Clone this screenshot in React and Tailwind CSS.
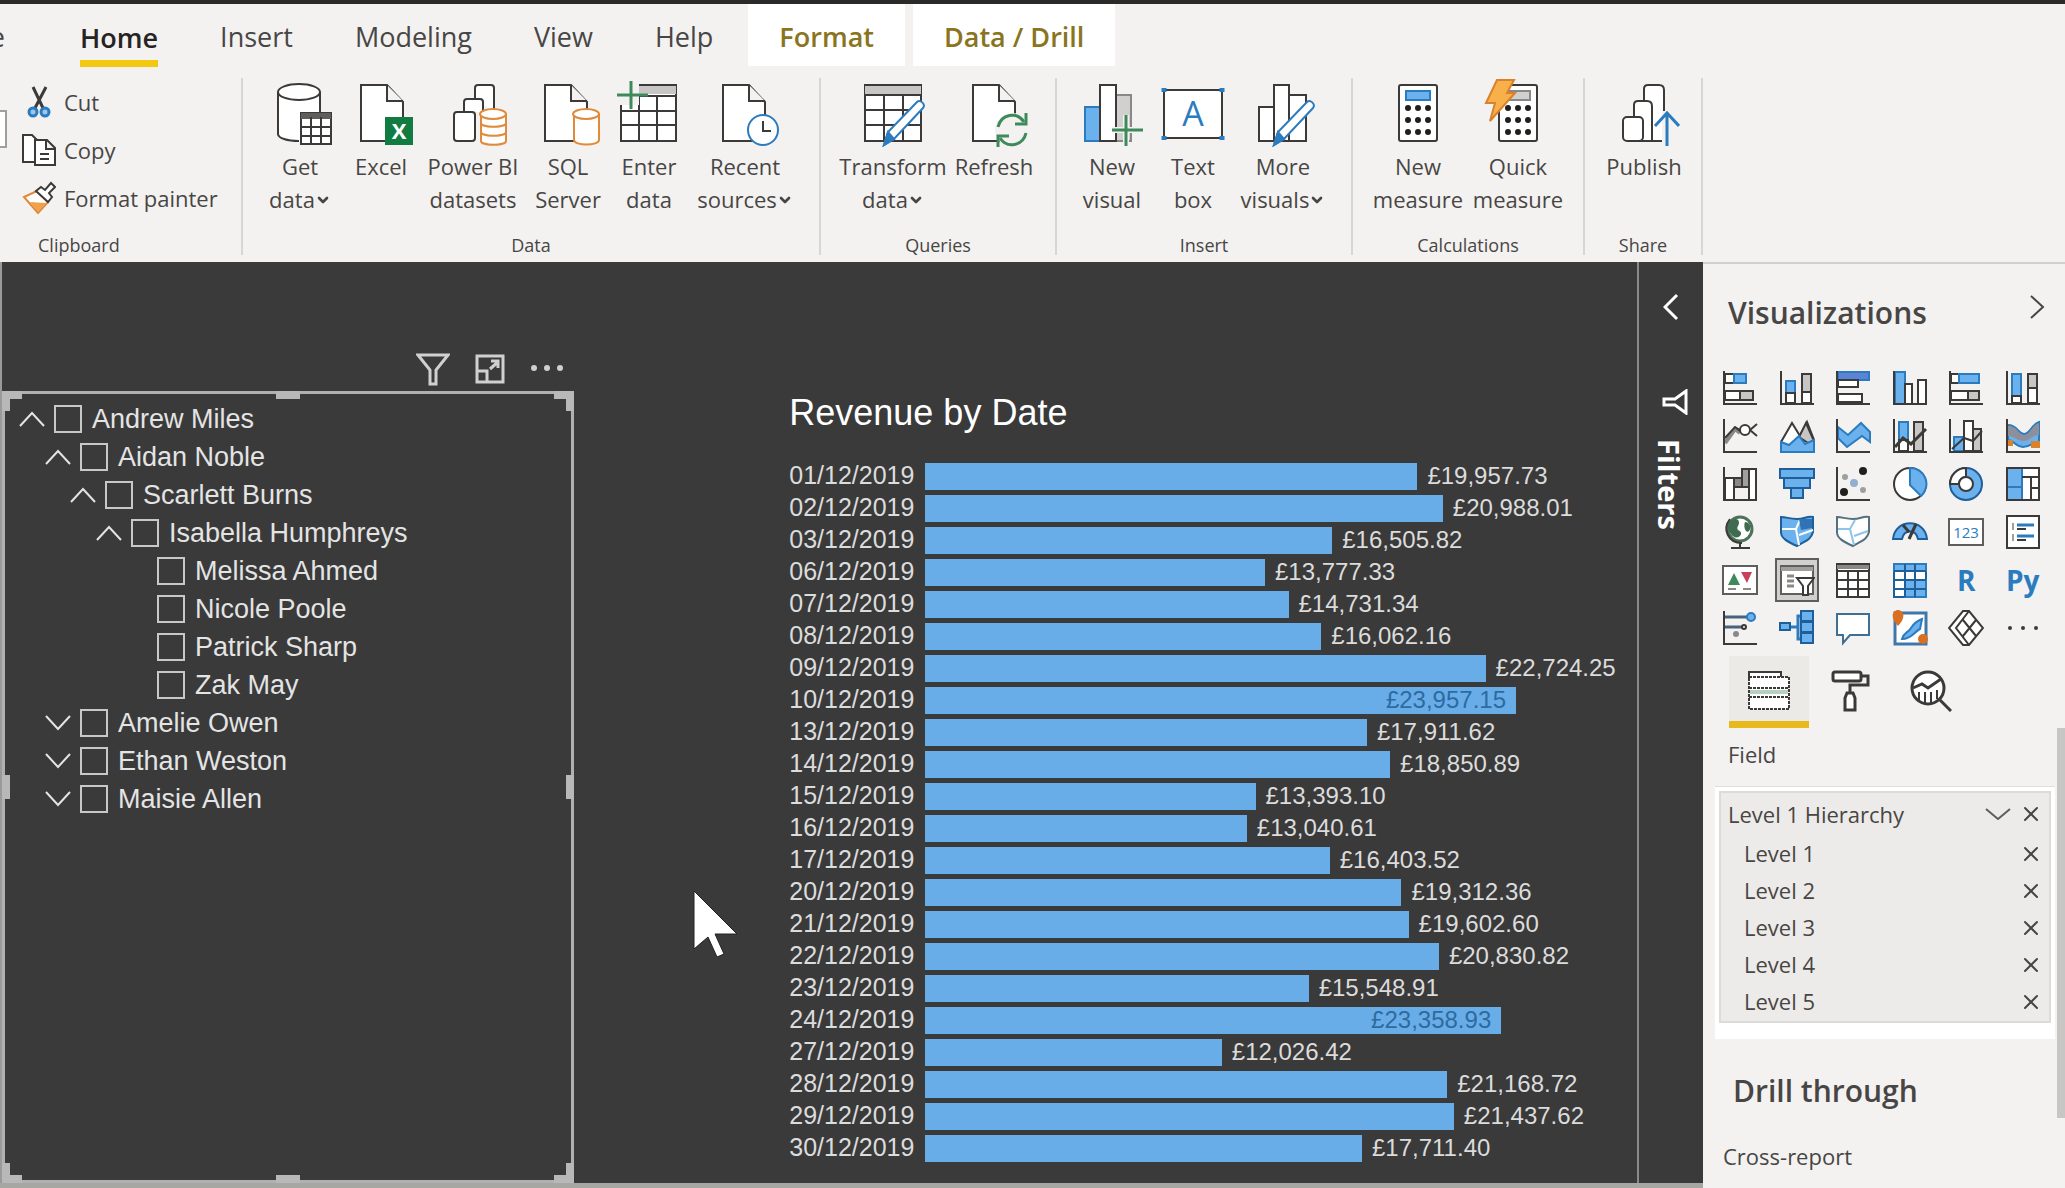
import { ChevronDown, X } from 'lucide-react';
import { useState } from 'react';

const DARK = '#3b3a39';
const BLUE = '#2b7bbf';
const SKY = '#6bb1ee';
const GREEN = '#3f8a5b';
const ORANGE = '#e08a3c';

/* ---------- ribbon icons (72 x 68) ---------- */

const RibbonSvg = ({ children }) => (
  <svg className="w-[72px] h-[68px] shrink-0" viewBox="0 0 72 68" fill="none" stroke={DARK} strokeWidth="2" aria-hidden="true">
    {children}
  </svg>
);

const Doc = ({ x = 13 }) => (
  <g transform={`translate(${x} 0)`}>
    <path d="M1 6h26l16 17v39H1z" fill="#fff" />
    <path d="M27 6v16h16" fill="#f3f2f1" />
  </g>
);

const Pencil = () => (
  <>
    <path d="M27 66l4-13 29-30c3-3 9 2 6 6L37 60z" fill="#fff" stroke={BLUE} />
    <path d="M27 66l4-13 6 7z" fill={BLUE} stroke={BLUE} />
  </>
);

const Calculator = ({ screen }) => (
  <>
    <rect x="17" y="6" width="38" height="56" rx="2" fill="#fff" />
    <rect x="24" y="12" width="24" height="9" fill={screen} stroke={screen === SKY ? BLUE : '#8a8886'} />
    {[29, 41, 53].map((y) =>
      [26, 36, 46].map((x) => <circle key={`${x}-${y}`} cx={x} cy={y} r="3" fill="#201f1e" stroke="none" />)
    )}
  </>
);

const ribbonIcons = {
  getData: (
    <RibbonSvg>
      <path d="M14 13v42c0 4 9 8 21 8h1V34h20V13z" fill="#fff" stroke="none" />
      <path d="M14 13v42c0 4 9 7 21 7M56 13v20" />
      <ellipse cx="35" cy="13" rx="21" ry="8" fill="#fff" />
      <rect x="37" y="34" width="30" height="31" fill="#fff" />
      <path d="M37 37h30" strokeWidth="6" stroke="#605e5c" />
      <path d="M37 48h30M37 57h30M47 38v27M57 38v27" />
    </RibbonSvg>
  ),
  excel: (
    <RibbonSvg>
      <Doc x={15} />
      <rect x="40" y="38" width="28" height="28" fill="#107c41" stroke="none" />
      <text x="54" y="60" fontSize="22" fontWeight="700" fill="#fff" stroke="none" textAnchor="middle">X</text>
    </RibbonSvg>
  ),
  datasets: (
    <RibbonSvg>
      <path d="M38 20V9q0-3 3-3h13q3 0 3 3v24" fill="#fff" />
      <path d="M27 33V23q0-3 3-3h13q3 0 3 3v10" fill="#fff" />
      <rect x="17" y="33" width="21" height="29" rx="3" fill="#fff" />
      <path d="M44 35v27c0 5 25 5 25 0V35" fill="#fff" stroke={ORANGE} />
      <ellipse cx="56" cy="35" rx="13" ry="5" fill="#fff" stroke={ORANGE} />
      <path d="M44 44c0 5 25 5 25 0M44 53c0 5 25 5 25 0" stroke={ORANGE} />
    </RibbonSvg>
  ),
  sql: (
    <RibbonSvg>
      <Doc x={12} />
      <path d="M42 35v26c0 6 25 6 25 0V35" fill="#fff" stroke={ORANGE} />
      <ellipse cx="54" cy="35" rx="13" ry="5" fill="#fff" stroke={ORANGE} />
    </RibbonSvg>
  ),
  enter: (
    <RibbonSvg>
      <rect x="8" y="6" width="55" height="56" fill="#fff" />
      <path d="M8 11h55" stroke="#c8c6c4" strokeWidth="8" />
      <path d="M8 6h55M8 17h55M8 32h55M8 46h55M26 17v45M44 17v45" />
      <path d="M2 0h24v26H2z" fill="#f3f2f1" stroke="none" />
      <path d="M18 2v28M4 16h31" stroke={GREEN} strokeWidth="3" />
    </RibbonSvg>
  ),
  recent: (
    <RibbonSvg>
      <Doc />
      <circle cx="54" cy="51" r="15" fill="#fff" stroke={BLUE} />
      <path d="M54 42v10h8" />
    </RibbonSvg>
  ),
  transform: (
    <RibbonSvg>
      <rect x="8" y="6" width="56" height="56" fill="#fff" />
      <path d="M8 11h56" strokeWidth="8" stroke="#c8c6c4" />
      <path d="M8 6h56M8 16h56M8 31h56M8 46h56M27 16v46M46 16v46" />
      <Pencil />
    </RibbonSvg>
  ),
  refresh: (
    <RibbonSvg>
      <Doc x={14} />
      <circle cx="54" cy="51" r="17" fill="#f3f2f1" stroke="none" />
      <path d="M40 48c3-13 19-16 26-5M68 54c-3 13-19 16-26 5" stroke={GREEN} strokeWidth="3" />
      <path d="M68 34v11H57M40 68V57h11" stroke={GREEN} strokeWidth="3" />
    </RibbonSvg>
  ),
  newVisual: (
    <RibbonSvg>
      <rect x="9" y="28" width="15" height="34" fill={SKY} stroke={BLUE} />
      <rect x="40" y="16" width="15" height="46" fill="#d2d0ce" stroke="#8a8886" />
      <rect x="24" y="6" width="16" height="56" fill="#fff" />
      <path d="M50 36v31M36 51h29" stroke="#f3f2f1" strokeWidth="6" />
      <path d="M50 36v31M36 51h31" stroke={GREEN} strokeWidth="3" />
    </RibbonSvg>
  ),
  textBox: (
    <RibbonSvg>
      <rect x="7" y="11" width="58" height="48" fill="#fff" />
      <path d="M7 9v4M65 9v4M7 57v4M65 57v4" stroke={BLUE} strokeWidth="5" />
      <text x="36" y="47" fontSize="34" fill={BLUE} stroke="none" textAnchor="middle">A</text>
    </RibbonSvg>
  ),
  moreVisuals: (
    <RibbonSvg>
      <rect x="12" y="28" width="15" height="34" fill="#fff" />
      <rect x="42" y="16" width="17" height="46" fill="#fff" />
      <rect x="27" y="6" width="15" height="56" fill="#fff" />
      <Pencil />
    </RibbonSvg>
  ),
  newMeasure: (
    <RibbonSvg>
      <Calculator screen={SKY} />
    </RibbonSvg>
  ),
  quickMeasure: (
    <RibbonSvg>
      <Calculator screen="#d2d0ce" />
      <path d="M15 1h17l-7 13h8L8 42l5-18H4z" fill="#f7b04a" stroke="#d9822b" />
    </RibbonSvg>
  ),
  publish: (
    <RibbonSvg>
      <path d="M36 20V10q0-4 4-4h11q5 0 5 5v51H36z" fill="#fff" />
      <path d="M26 38V26q0-4 4-4h9q5 0 5 5v35H26z" fill="#fff" />
      <rect x="15" y="38" width="20" height="24" rx="4" fill="#fff" />
      <path d="M59 32v35" stroke="#f3f2f1" strokeWidth="10" />
      <path d="M59 34v33M47 47l12-13 12 13" stroke={BLUE} strokeWidth="3" />
    </RibbonSvg>
  )
};

/* ---------- visual gallery icons (36 x 36) ---------- */

const Axis = () => <path d="M2 1v33h33" />;

const visuals = [
  ['Stacked bar chart', <><rect x="3" y="4" width="9" height="9" fill="#fff" /><rect x="12" y="4" width="12" height="9" fill={SKY} stroke={BLUE} /><rect x="3" y="21" width="15" height="9" fill="#fff" /><rect x="18" y="21" width="13" height="9" fill="#c8c6c4" /><Axis /></>],
  ['Stacked column chart', <><rect x="7" y="11" width="9" height="12" fill={SKY} stroke={BLUE} /><rect x="7" y="23" width="9" height="10" fill="#fff" /><rect x="23" y="4" width="9" height="18" fill="#c8c6c4" /><rect x="23" y="22" width="9" height="11" fill="#fff" /><Axis /></>],
  ['Clustered bar chart', <><rect x="3" y="2" width="31" height="8" fill="#5b84d6" stroke={BLUE} /><rect x="3" y="10" width="20" height="7" fill="#fff" /><rect x="3" y="24" width="24" height="8" fill="#fff" /><Axis /></>],
  ['Clustered column chart', <><rect x="3" y="2" width="10" height="32" fill={SKY} stroke={BLUE} /><rect x="13" y="14" width="7" height="20" fill="#fff" /><rect x="26" y="10" width="8" height="24" fill="#fff" /><Axis /></>],
  ['100% stacked bar chart', <><rect x="3" y="4" width="8" height="9" fill="#fff" /><rect x="11" y="4" width="20" height="9" fill={SKY} stroke={BLUE} /><rect x="3" y="21" width="17" height="9" fill="#fff" /><rect x="20" y="21" width="11" height="9" fill="#c8c6c4" /><Axis /></>],
  ['100% stacked column chart', <><rect x="7" y="4" width="9" height="22" fill={SKY} stroke={BLUE} /><rect x="7" y="26" width="9" height="7" fill="#fff" /><rect x="23" y="4" width="9" height="14" fill="#c8c6c4" /><rect x="23" y="18" width="9" height="15" fill="#fff" /><Axis /></>],

  ['Line chart', <><path d="M3 25L13 11l5 4" stroke="#8a8886" strokeWidth="4" /><path d="M3 20L13 9l5 4M28 12l7-6M28 12l7 6M13 9l5 3" /><circle cx="23" cy="12" r="5" fill="#fff" /><Axis /></>],
  ['Area chart', <><path d="M2 34V24L13 5l8 13 7-14 7 18v12z" fill="#fff" /><path d="M20 19l7-14 8 18v6z" fill="#c8c6c4" /><path d="M2 34V24l8 3 10-9 6 8 9-4v12z" fill={SKY} stroke={BLUE} /></>],
  ['Stacked area chart', <><path d="M3 9l10 8L26 5l9 9v10l-8-6-15 11-9-9z" fill={SKY} stroke={BLUE} /><Axis /></>],
  ['Line and stacked column chart', <><rect x="7" y="4" width="9" height="18" fill={SKY} stroke={BLUE} /><rect x="7" y="22" width="9" height="11" fill="#fff" /><rect x="22" y="4" width="9" height="29" fill="#c8c6c4" /><path d="M3 29l8-9 8 6 15-15" strokeWidth="3" /><Axis /></>],
  ['Line and clustered column chart', <><rect x="6" y="19" width="10" height="14" fill={SKY} stroke={BLUE} /><rect x="16" y="3" width="9" height="30" fill="#fff" /><rect x="25" y="11" width="8" height="22" fill="#c8c6c4" /><path d="M4 31l12-11 9 3 9-10" /><Axis /></>],
  ['Ribbon chart', <><path d="M3 7c10 0 10 9 16 9s8-10 15-12v20c-6 0-8 5-16 5S9 22 3 22z" fill={SKY} stroke={BLUE} /><path d="M3 8c10 0 10 9 16 9s8-10 15-12v12c-8 0-8 6-15 6S9 18 3 18z" fill="#8f8f9c" stroke="none" /><path d="M26 23h9v7h-9zM3 22h5v6H3z" fill="#d9822b" stroke="none" /><Axis /></>],

  ['Waterfall chart', <><rect x="3" y="12" width="9" height="22" fill="#fff" /><rect x="12" y="12" width="10" height="9" fill="#8a8886" /><rect x="20" y="3" width="7" height="18" fill="#a19f9d" /><rect x="27" y="3" width="7" height="31" fill="#fff" /><Axis /></>],
  ['Funnel', <g fill={SKY} stroke="#1f5f99"><rect x="1" y="3" width="34" height="9" /><rect x="5" y="12" width="26" height="10" /><rect x="12" y="22" width="12" height="10" /></g>],
  ['Scatter chart', <><g stroke="none"><circle cx="28" cy="5" r="4" fill="#201f1e" /><circle cx="9" cy="26" r="4" fill="#201f1e" /><circle cx="10" cy="11" r="3" fill="#a19f9d" /><circle cx="19" cy="17" r="4" fill="#8fb0cf" /><circle cx="28" cy="24" r="3" fill="#a19f9d" /></g><Axis /></>],
  ['Pie chart', <><circle cx="18" cy="18" r="16" fill="#fff" /><path d="M18 2v17l11 11A16 16 0 0 0 18 2z" fill={SKY} stroke={BLUE} /></>],
  ['Donut chart', <><circle cx="18" cy="18" r="16" fill={SKY} stroke="#1f5f99" /><path d="M18 2A16 16 0 0 0 2 18h9a7 7 0 0 1 7-7z" fill="#fff" /><circle cx="18" cy="18" r="7" fill="#fff" /></>],
  ['Treemap', <><rect x="2" y="2" width="32" height="32" fill="#fff" /><path d="M2 2h15v32H2zM2 21h15" fill={SKY} stroke={BLUE} /><path d="M17 11h17M26 11v23M26 22h8M2 2h32v32H2z" /></>],

  ['Map', <><circle cx="18" cy="15" r="12" fill="#fff" stroke="#4a7359" strokeWidth="3" /><path d="M9 7c6-5 10 0 7 5s4 4 3 8-7 5-10 0-5-8 0-13zM23 8c5 0 7 6 4 9s-6-4-4-9z" fill="#3f6b4f" stroke="none" /><path d="M8 5C0 15 6 29 20 29M18 29v5M9 34h19" /></>],
  ['Filled map', <><path d="M2 3c6 0 8 2 16 2s9-3 16-2v15c-2 8-8 9-16 14C9 28 1 24 2 17z" fill={SKY} stroke="#1f5f99" /><path d="M3 15h14l4-9M17 15l3 16M20 21l14-5" stroke="#fff" /><path d="M20 5h13v9l-11 2z" fill="#2f72b5" stroke="none" /></>],
  ['Shape map', <><path d="M2 3c6 0 8 2 16 2s9-3 16-2v15c-2 8-8 9-16 14C9 28 1 24 2 17z" fill="#fff" stroke="#55707d" /><path d="M3 15h12l5-9M15 15l4 16M19 22l14-5" stroke="#8fc4ea" /></>],
  ['Gauge', <><path d="M1 25C3 4 33 4 35 25h-9c-2-10-14-10-16 0z" fill={SKY} stroke="#1f5f99" /><path d="M11 11l6 7M24 10l-7 15" strokeWidth="3" /></>],
  ['Card', <><rect x="1" y="5" width="34" height="26" fill="#fff" stroke="#605e5c" /><text x="18" y="24" fontSize="15" fill={BLUE} stroke="none" textAnchor="middle">123</text></>],
  ['Multi-row card', <><rect x="2" y="2" width="32" height="32" fill="#fff" /><path d="M8 9v7M8 20v7" stroke="#a19f9d" /><path d="M12 11h17M12 22h17" stroke={BLUE} strokeWidth="3" /><path d="M12 15h9M12 26h9" /></>],

  ['KPI', <><rect x="1" y="4" width="34" height="28" fill="#fff" stroke="#605e5c" /><path d="M6 23l6-12 6 12z" fill={GREEN} stroke="none" /><path d="M19 10h11l-5 11z" fill="#c8415a" stroke="none" /><path d="M6 27h8M21 27h8" stroke="#8a8886" /></>],
  ['Slicer', <><rect x="2" y="4" width="32" height="28" fill="#fff" stroke="#605e5c" /><path d="M2 7h32" stroke="#a19f9d" strokeWidth="4" /><path d="M8 14h7M8 19h7M8 24h7" stroke="#8a8886" strokeWidth="3" /><path d="M18 16h17l-6 8v9h-5v-9z" fill="#fff" /></>],
  ['Table', <><rect x="2" y="2" width="32" height="33" fill="#fff" /><path d="M2 5h32" stroke="#8a8886" strokeWidth="4" /><path d="M2 9h32M2 18h32M2 27h32M13 9v26M23 9v26" /></>],
  ['Matrix', <><rect x="2" y="2" width="32" height="33" fill="#fff" stroke="#1f5f99" /><path d="M2 2h32v7H2zM13 18h21v17H13z" fill={SKY} stroke={BLUE} /><path d="M2 9h32M2 18h32M2 27h32M13 2v33M23 2v33" stroke="#1f5f99" /></>],
  ['R script visual', <span className="text-[28px] leading-9 font-bold text-[#2b7bbf]">R</span>],
  ['Python visual', <span className="text-[28px] leading-9 font-bold text-[#2b7bbf]">Py</span>],

  ['Key influencers', <><path d="M3 7h24M3 17h18" stroke="#46627c" strokeWidth="3" /><circle cx="29" cy="7" r="4" fill={SKY} stroke={BLUE} /><circle cx="22" cy="17" r="2" /><circle cx="14" cy="24" r="3" fill="#8a8886" stroke="none" /><Axis /></>],
  ['Decomposition tree', <><path d="M10 17h9M24 6h-5v23h5" stroke={BLUE} strokeWidth="3" /><g fill={SKY} stroke="#1f5f99"><rect x="1" y="13" width="10" height="7" /><rect x="22" y="1" width="12" height="10" /><rect x="22" y="12" width="12" height="10" /><rect x="22" y="23" width="12" height="10" /></g></>],
  ['Q&A', <path d="M2 4h32v21H15l-7 8v-8H2z" fill="#fff" stroke="#3f6f95" />],
  ['ArcGIS map', <><rect x="3" y="3" width="31" height="31" fill="#fff" stroke="#3f77ab" strokeWidth="3" /><path d="M10 29c2-7 6-6 9-11s6-7 11-9l-2 10c-5 2-8 10-18 10z" fill={SKY} stroke={BLUE} /><path d="M6 16C-3 7 1 0 6 0s9 7 0 16z" fill="#d9701f" stroke="none" /><circle cx="31" cy="29" r="5" fill="#d9701f" stroke="none" /></>],
  ['Power Apps', <><path d="M15 1h6l14 17-14 17h-6L1 18z" fill="#fff" /><path d="M21 1L8 18l13 17M15 10l13 16M28 10L15 26" /></>],
  ['More visuals', <g fill={DARK} stroke="none"><circle cx="5" cy="18" r="2" /><circle cx="18" cy="18" r="2" /><circle cx="31" cy="18" r="2" /></g>]
];

const textVisuals = ['R script visual', 'Python visual'];

/* ---------- data ---------- */

const ribbonGroups = [
  {
    name: 'Data',
    className: 'w-[578px] pl-[17px]',
    buttons: [
      ['getData', 'w-20', 'Get', 'data', true],
      ['excel', 'w-[82px]', 'Excel'],
      ['datasets', 'w-[102px]', 'Power BI', 'datasets'],
      ['sql', 'w-[88px]', 'SQL', 'Server'],
      ['enter', 'w-[74px]', 'Enter', 'data'],
      ['recent', 'w-[118px]', 'Recent', 'sources', true]
    ]
  },
  {
    name: 'Queries',
    className: 'w-[236px] pl-[17px]',
    buttons: [
      ['transform', 'w-[110px]', 'Transform', 'data', true],
      ['refresh', 'w-[92px]', 'Refresh']
    ]
  },
  {
    name: 'Insert',
    className: 'w-[296px] pl-[14px]',
    buttons: [
      ['newVisual', 'w-[82px]', 'New', 'visual'],
      ['textBox', 'w-20', 'Text', 'box'],
      ['moreVisuals', 'w-[100px]', 'More', 'visuals', true]
    ]
  },
  {
    name: 'Calculations',
    className: 'w-[232px] pl-[15px]',
    buttons: [
      ['newMeasure', 'w-[100px]', 'New', 'measure'],
      ['quickMeasure', 'w-[100px]', 'Quick', 'measure']
    ]
  },
  {
    name: 'Share',
    className: 'w-[118px] pl-[9px]',
    buttons: [['publish', 'w-[100px]', 'Publish']]
  }
];

const people = [
  { name: 'Andrew Miles', level: 0, open: true },
  { name: 'Aidan Noble', level: 1, open: true },
  { name: 'Scarlett Burns', level: 2, open: true },
  { name: 'Isabella Humphreys', level: 3, open: true },
  { name: 'Melissa Ahmed', level: 4 },
  { name: 'Nicole Poole', level: 4 },
  { name: 'Patrick Sharp', level: 4 },
  { name: 'Zak May', level: 4 },
  { name: 'Amelie Owen', level: 1, open: false },
  { name: 'Ethan Weston', level: 1, open: false },
  { name: 'Maisie Allen', level: 1, open: false }
];

const indents = ['pl-[14px]', 'pl-[40px]', 'pl-[65px]', 'pl-[91px]', 'pl-[117px]'];

const revenue = [
  ['01/12/2019', 19957.73],
  ['02/12/2019', 20988.01],
  ['03/12/2019', 16505.82],
  ['06/12/2019', 13777.33],
  ['07/12/2019', 14731.34],
  ['08/12/2019', 16062.16],
  ['09/12/2019', 22724.25],
  ['10/12/2019', 23957.15],
  ['13/12/2019', 17911.62],
  ['14/12/2019', 18850.89],
  ['15/12/2019', 13393.1],
  ['16/12/2019', 13040.61],
  ['17/12/2019', 16403.52],
  ['20/12/2019', 19312.36],
  ['21/12/2019', 19602.6],
  ['22/12/2019', 20830.82],
  ['23/12/2019', 15548.91],
  ['24/12/2019', 23358.93],
  ['27/12/2019', 12026.42],
  ['28/12/2019', 21168.72],
  ['29/12/2019', 21437.62],
  ['30/12/2019', 17711.4]
];

const maxRevenue = Math.max(...revenue.map(([, value]) => value));

const formatMoney = (value) =>
  '£' + value.toLocaleString('en-GB', { minimumFractionDigits: 2, maximumFractionDigits: 2 });

/* ---------- ribbon ---------- */

const Tabs = () => (
  <nav className="flex h-[62px] items-stretch text-[27px] text-[#484644]">
    <button className="w-[5px] mr-11 flex justify-end items-center overflow-hidden pt-1">File</button>
    <button className="px-[31px] pt-3 font-semibold text-[#252423]">
      <span className="block leading-[44px] border-b-[7px] border-[#f2c811]">Home</span>
    </button>
    {['Insert', 'Modeling', 'View', 'Help'].map((tab) => (
      <button key={tab} className="px-[31px] pt-1">{tab}</button>
    ))}
    <button className="bg-white px-[31px] pt-1 ml-1 font-semibold text-[#8a7420]">Format</button>
    <button className="bg-white px-[31px] pt-1 ml-2 font-semibold text-[#8a7420]">Data / Drill</button>
  </nav>
);

const Clipboard = () => (
  <div className="w-[243px] shrink-0 flex border-r-2 border-[#d8d6d4]">
    <div className="w-[7px] h-[38px] mt-8 mr-[15px] shrink-0 border-2 border-l-0 border-[#a19f9d] bg-white" />
    <div className="flex flex-col text-[22px]">
      <button className="h-12 flex items-center gap-2">
        <svg className="w-[34px] h-[34px]" viewBox="0 0 34 34" fill="none" strokeWidth="3">
          <path d="M11 2l10 21M24 2L13 23" stroke={DARK} />
          <circle cx="11" cy="27" r="4" stroke={BLUE} fill="#9cc7ec" />
          <circle cx="23" cy="27" r="4" stroke={BLUE} fill="#9cc7ec" />
        </svg>
        Cut
      </button>
      <button className="h-12 flex items-center gap-2">
        <svg className="w-[34px] h-[34px]" viewBox="0 0 34 34" fill="#fff" stroke={DARK} strokeWidth="2">
          <path d="M13 29H1V2h9l5 5" />
          <path d="M13 7h12l8 8v17H13zM24 7v9h9M18 21h9M18 26h9" />
        </svg>
        Copy
      </button>
      <button className="h-12 flex items-center gap-2">
        <svg className="w-[34px] h-[34px]" viewBox="0 0 34 34" strokeWidth="2">
          <path d="M2 16l13-6 11 11-10 11z" fill="#fff" stroke={ORANGE} />
          <path d="M8 21l16 1-8 9z" fill="#f0a24a" stroke="none" />
          <path d="M14 10l5-4 4 3 6-7 4 4-6 6 3 4-4 5z" fill="#fff" stroke={DARK} />
        </svg>
        Format painter
      </button>
      <p className="mt-auto pl-4 text-lg leading-5">Clipboard</p>
    </div>
  </div>
);

const RibbonButton = ({ icon, width, line1, line2, menu }) => (
  <button className={`${width} shrink-0 flex flex-col items-center whitespace-nowrap text-[22px] leading-[33px]`}>
    {ribbonIcons[icon]}
    <span className="mt-[3px]">{line1}</span>
    {line2 && (
      <span className="flex items-center">
        {line2}
        {menu && <ChevronDown className="w-4 h-4" strokeWidth={4} />}
      </span>
    )}
  </button>
);

const Ribbon = () => (
  <header className="h-[262px] shrink-0 border-t-4 border-[#2b2a29] bg-[#f3f2f1] overflow-hidden">
    <Tabs />
    <div className="mt-3 h-[177px] flex text-[#484644]">
      <Clipboard />
      {ribbonGroups.map((group) => (
        <section key={group.name} className={`${group.className} shrink-0 relative border-r-2 border-[#d8d6d4]`}>
          <div className="flex pt-px">
            {group.buttons.map(([icon, width, line1, line2, menu]) => (
              <RibbonButton key={icon} icon={icon} width={width} line1={line1} line2={line2} menu={menu} />
            ))}
          </div>
          <p className="absolute inset-x-0 bottom-0 text-center text-lg leading-5">{group.name}</p>
        </section>
      ))}
    </div>
  </header>
);

/* ---------- report canvas ---------- */

const handles = [
  '-left-[3px] -top-[3px] w-5 h-2',
  '-left-[3px] -top-[3px] w-2 h-5',
  '-right-[3px] -top-[3px] w-5 h-2',
  '-right-[3px] -top-[3px] w-2 h-5',
  '-left-[3px] -bottom-[3px] w-5 h-2',
  '-left-[3px] -bottom-[3px] w-2 h-5',
  '-right-[3px] -bottom-[3px] w-5 h-2',
  '-right-[3px] -bottom-[3px] w-2 h-5',
  'left-1/2 -ml-3 -top-[3px] w-6 h-2',
  'left-1/2 -ml-3 -bottom-[3px] w-6 h-2',
  '-left-[3px] top-1/2 -mt-3 w-2 h-6',
  '-right-[3px] top-1/2 -mt-3 w-2 h-6'
];

const Slicer = () => {
  const [checked, setChecked] = useState({});

  const toggle = (name) => setChecked((prev) => ({ ...prev, [name]: !prev[name] }));

  return (
    <section className="w-[35%] shrink-0 flex flex-col pt-[89px]">
      <div className="flex justify-end items-center gap-[25px] h-10 pr-[10px] pb-1 text-[#d0d0d0]">
        <button aria-label="Filters on this visual">
          <svg className="w-[34px] h-[34px]" viewBox="0 0 34 34" fill="none" stroke="currentColor" strokeWidth="3">
            <path d="M2 3h30L20 18v14h-6V18z" />
          </svg>
        </button>
        <button aria-label="Focus mode">
          <svg className="w-[30px] h-[30px]" viewBox="0 0 30 30" fill="none" stroke="currentColor" strokeWidth="3">
            <path d="M2 2h26v26H2zM23 8l-8 7M16 7h7v7M2 17h10v11" />
          </svg>
        </button>
        <button aria-label="More options">
          <svg className="w-[34px] h-[34px]" viewBox="0 0 34 34" fill="currentColor">
            <circle cx="4" cy="16" r="3" />
            <circle cx="17" cy="16" r="3" />
            <circle cx="30" cy="16" r="3" />
          </svg>
        </button>
      </div>
      <div className="relative flex-1 border-[3px] border-[#b0b0b0] pt-[6px]">
        <ul>
          {people.map(({ name, level, open }) => (
            <li key={name} className={`${indents[level]} h-[38px] flex items-center text-[27px] text-[#e4e4e4]`}>
              {open === undefined ? (
                <span className="w-[26px]" />
              ) : (
                <button className="w-[26px]" aria-label={open ? `Collapse ${name}` : `Expand ${name}`}>
                  <svg className="w-[26px] h-4" viewBox="0 0 26 16" fill="none" stroke="currentColor" strokeWidth="2">
                    <path d={open ? 'M1 15L13 2l12 13' : 'M1 1l12 13L25 1'} />
                  </svg>
                </button>
              )}
              <label className="flex items-center whitespace-nowrap">
                <input
                  type="checkbox"
                  checked={!!checked[name]}
                  onChange={() => toggle(name)}
                  className="appearance-none w-7 h-7 ml-[9px] mr-[10px] border-2 border-[#c8c8c8] checked:bg-[#c8c8c8]"
                />
                {name}
              </label>
            </li>
          ))}
        </ul>
        {handles.map((position) => (
          <span key={position} className={`absolute bg-[#b8b8b8] ${position}`} />
        ))}
      </div>
    </section>
  );
};

const RevenueChart = () => (
  <section className="flex-1 min-w-0 pl-[215px] pt-[127px] text-[#dcdcdc]">
    <h2 className="h-[71px] text-4xl leading-[48px] text-white">Revenue by Date</h2>
    <ul className="text-2xl">
      {revenue.map(([date, value]) => {
        const inside = value > 23000;
        return (
          <li key={date} className="h-8 flex items-center whitespace-nowrap">
            <span className="w-[136px] shrink-0 text-[25px]">{date}</span>
            <div className="flex-1 mr-[121px] flex items-center gap-[10px]">
              <div
                className="h-[27px] shrink-0 flex items-center justify-end bg-[#69ade8] pr-[10px] text-[#2d6b9f]"
                style={{ width: `${(value / maxRevenue) * 100}%` }}
              >
                {inside && formatMoney(value)}
              </div>
              {!inside && <span>{formatMoney(value)}</span>}
            </div>
          </li>
        );
      })}
    </ul>
  </section>
);

const FiltersPane = () => (
  <aside className="w-[66px] shrink-0 flex flex-col items-center bg-[#3a3a3a] border-l-2 border-[#8a8a8a] pt-[29px] text-white">
    <button aria-label="Expand filters">
      <svg className="w-4 h-8" viewBox="0 0 16 32" fill="none" stroke="currentColor" strokeWidth="3">
        <path d="M14 4L2 16l12 12" />
      </svg>
    </button>
    <svg className="w-[26px] h-[26px] mt-[66px] ml-2" viewBox="0 0 26 26" fill="none" stroke="currentColor" strokeWidth="3">
      <path d="M24 2v22L13 16H2v-6h11z" />
    </svg>
    <h2 className="mt-[24px] mr-1 text-[29px] leading-8 font-bold [writing-mode:vertical-rl]">Filters</h2>
  </aside>
);

/* ---------- visualizations pane ---------- */

const VisualizationsPane = () => (
  <aside className="w-[362px] shrink-0 flex bg-[#f3f2f1] border-t-2 border-[#d2d0ce] text-[#484644]">
    <div className="flex-1 min-w-0">
      <div className="flex items-center justify-between pl-[25px] pr-[10px] pt-[25px]">
        <h2 className="text-[30px] leading-[48px] font-semibold">Visualizations</h2>
        <button aria-label="Collapse pane" className="pb-3">
          <svg className="w-4 h-8" viewBox="0 0 16 32" fill="none" stroke="currentColor" strokeWidth="2">
            <path d="M2 5l12 11L2 27" />
          </svg>
        </button>
      </div>
      <div className="mt-[27px] pl-[9px] pr-1 grid grid-cols-6">
        {visuals.map(([name, drawing]) => (
          <button key={name} aria-label={name} className="h-12 flex items-center justify-center">
            {textVisuals.includes(name) ? (
              drawing
            ) : (
              <span className={name === 'Slicer' ? 'p-[2px] bg-[#d2d0ce] border-2 border-[#605e5c]' : ''}>
                <svg className="w-9 h-9" viewBox="0 0 36 36" fill="none" stroke={DARK} strokeWidth="2">
                  {drawing}
                </svg>
              </span>
            )}
          </button>
        ))}
      </div>

      <div className="flex pl-[26px] mt-1 h-[72px]">
        <button aria-label="Fields" className="w-20 pt-1 flex justify-center items-center bg-[#eceae6] border-b-[7px] border-[#e8b91c]">
          <svg className="w-[42px] h-[42px]" viewBox="0 0 42 42" fill="#fff" stroke={DARK} strokeWidth="2">
            <path d="M1 8V2h32v6" />
            <rect x="1" y="7" width="40" height="32" strokeDasharray="3 1" />
            <path d="M1 18h40M1 27h40" strokeDasharray="3 1" />
            <path d="M2 22h38" stroke="#b8d0c0" strokeWidth="4" />
          </svg>
        </button>
        <button aria-label="Format" className="w-20 pt-1 pb-[7px] pl-1 flex justify-center items-center">
          <svg className="w-[42px] h-[42px]" viewBox="0 0 42 42" fill="#fff" stroke={DARK} strokeWidth="3">
            <path d="M31 6h7v9H20v8" fill="none" />
            <rect x="3" y="2" width="28" height="9" rx="2" />
            <path d="M17 23h6l2 5v12H15V28z" />
          </svg>
        </button>
        <button aria-label="Analytics" className="w-20 pt-1 pb-[7px] pl-1 flex justify-center items-center">
          <svg className="w-[42px] h-[42px]" viewBox="0 0 42 42" fill="none" stroke={DARK} strokeWidth="3">
            <circle cx="18" cy="18" r="16" fill="#fff" />
            <path d="M30 30l11 11M3 18l9-4 6 4 13-9" />
            <path d="M9 22v8M15 22v11M21 22v11M27 20v9" strokeWidth="2" />
          </svg>
        </button>
      </div>

      <h3 className="pl-[25px] pt-[10px] h-[58px] text-[22px] leading-8">Field</h3>
      <div className="ml-3 bg-white border-t border-[#e1dfdd] px-1 pt-1 pb-4">
        <ul className="border-2 border-[#dddbd9] bg-[#edebe9] pb-px text-[22px]">
          {['Level 1 Hierarchy', 'Level 1', 'Level 2', 'Level 3', 'Level 4', 'Level 5'].map((field, i) => (
            <li key={field} className={i === 0 ? 'h-[42px] pl-[7px] pr-[6px] flex items-center' : 'h-[37px] pl-[23px] pr-[6px] flex items-center'}>
              <span className="flex-1">{field}</span>
              {i === 0 && (
                <button aria-label="Field options">
                  <svg className="w-[26px] h-3 mr-2" viewBox="0 0 26 12" fill="none" stroke="#605e5c" strokeWidth="2">
                    <path d="M1 1l12 10L25 1" />
                  </svg>
                </button>
              )}
              <button aria-label={`Remove ${field}`}>
                <X className="w-6 h-6" strokeWidth={2} />
              </button>
            </li>
          ))}
        </ul>
      </div>
      <h2 className="pl-[30px] pt-[28px] text-[30px] leading-[48px] font-semibold">Drill through</h2>
      <p className="pl-5 pt-[25px] text-[22px] leading-8">Cross-report</p>
    </div>
    <div className="w-2 ml-[2px] shrink-0 pt-[464px]">
      <div className="h-[390px] bg-[#c8c6c4]" />
    </div>
  </aside>
);

const App = () => (
  <div className="min-h-screen flex flex-col bg-[#f3f2f1] font-['Open_Sans',sans-serif]">
    <Ribbon />
    <div className="flex-1 flex">
      <div className="flex-1 min-w-0 flex border-b-[5px] border-[#a6a6a2]">
        <main className="relative flex-1 min-w-0 flex bg-[#3a3a3a] border-l-2 border-[#9a9a9a] font-['Liberation_Sans',sans-serif]">
          <Slicer />
          <RevenueChart />
          <svg className="absolute left-[690px] top-[628px] w-[48px] h-[68px]" viewBox="0 0 48 68" fill="#fff" stroke="#222" strokeWidth="1">
            <path d="M2 1v58l14-12 9 20 7-3-9-20h22z" />
          </svg>
        </main>
        <FiltersPane />
      </div>
      <VisualizationsPane />
    </div>
  </div>
);

export default App;
